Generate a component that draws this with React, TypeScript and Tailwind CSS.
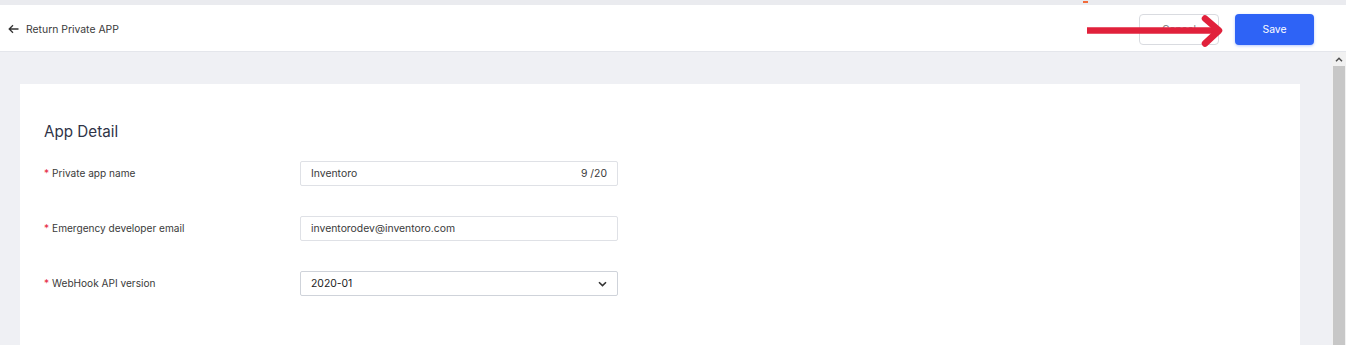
import React from "react";

const font = { fontFamily: "Inter, 'Noto Sans', sans-serif" };

export default function App() {
  return (
    <div className="w-[1346px] h-[345px] flex flex-col bg-[#eff0f4] overflow-hidden text-[#333]" style={font}>
      <TopStrip />
      <Header />
      <div className="flex flex-1 min-h-0">
        <main className="flex-1 pl-5 pr-[32px] pt-[32px]">
          <Card />
        </main>
        <Scrollbar />
      </div>
    </div>
  );
}

function TopStrip() {
  return (
    <div className="h-[5px] bg-[#eaebef] flex">
      <div className="ml-[1083px] mt-[1px] h-[2px] w-[5px] bg-[#f26b3a]" />
    </div>
  );
}

function Header() {
  return (
    <header className="relative h-[47px] bg-white border-b border-[#e4e6eb] flex items-center pt-[3px] pl-[8px] pr-[32px]">
      <a href="#" className="flex items-center gap-[7px] text-[10.4px] text-[#3a3a3a]">
        <svg width="11" height="10" viewBox="0 0 11 10" fill="none" stroke="#333" strokeWidth="1.3">
          <path d="M10.5 5H1.2M5 1.2 1.2 5 5 8.8" />
        </svg>
        Return Private APP
      </a>
      <div className="ml-auto flex items-center gap-4">
        <button className="w-[80px] h-[31px] rounded-[4px] border border-[#d9dbe0] bg-white text-[10.4px] text-[#888]">
          Cancel
        </button>
        <button className="w-[79px] h-[31px] rounded-[4px] bg-[#2e63f6] text-white text-[10.4px] shadow-[0_1px_3px_rgba(46,99,246,0.35)]">
          Save
        </button>
      </div>
      <svg className="absolute left-[1085px] top-[10px]" width="142" height="34" viewBox="0 0 142 34" fill="none">
        <path d="M2 15.5H131" stroke="#e1213b" strokeWidth="6.5" />
        <path d="M120 3.5 134 15.5 120 28.5" stroke="#e1213b" strokeWidth="6.5" strokeLinecap="round" strokeLinejoin="round" />
      </svg>
    </header>
  );
}

function Card() {
  return (
    <section className="bg-white h-full pl-[24px] pt-[38px]">
      <h2 className="text-[15.2px] text-[#2f3447] leading-5">App Detail</h2>
      <div className="mt-[19px] flex flex-col gap-[30px]">
        <Row label="Private app name">
          <div className="w-[318px] h-[25px] border border-[#dfe1e6] rounded-[2px] flex items-center px-[10px] text-[10.4px] text-[#3a3a3a]">
            <span>Inventoro</span>
            <span className="ml-auto">9 /20</span>
          </div>
        </Row>
        <Row label="Emergency developer email">
          <div className="w-[318px] h-[25px] border border-[#dfe1e6] rounded-[2px] flex items-center px-[10px] text-[10.4px] text-[#3a3a3a]">
            inventorodev@inventoro.com
          </div>
        </Row>
        <Row label="WebHook API version">
          <div className="w-[318px] h-[25px] border border-[#cfd3da] rounded-[2px] flex items-center px-[10px] text-[10.4px] text-[#222]">
            <span>2020-01</span>
            <svg className="ml-auto" width="9" height="6" viewBox="0 0 9 6" fill="none" stroke="#333" strokeWidth="1.6">
              <path d="M1 1.2 4.5 4.6 8 1.2" />
            </svg>
          </div>
        </Row>
      </div>
    </section>
  );
}

function Row({ label, children }: { label: string; children: React.ReactNode }) {
  return (
    <div className="flex items-center">
      <div className="w-[256px] flex items-center text-[10.1px] text-[#3a3a3a]">
        <span className="text-[#e5243b] mr-[3px]">*</span>
        {label}
      </div>
      {children}
    </div>
  );
}

function Scrollbar() {
  return (
    <div className="w-[14px] bg-[#f1f1f1] flex flex-col items-stretch">
      <div className="h-[14px] flex items-center justify-center">
        <svg width="8" height="5" viewBox="0 0 8 5" fill="none" stroke="#505050" strokeWidth="1.5">
          <path d="M1 4.3 4 1.3 7 4.3" />
        </svg>
      </div>
      <div className="flex-1 mx-[1px] bg-[#c7c7c7]" />
    </div>
  );
}
